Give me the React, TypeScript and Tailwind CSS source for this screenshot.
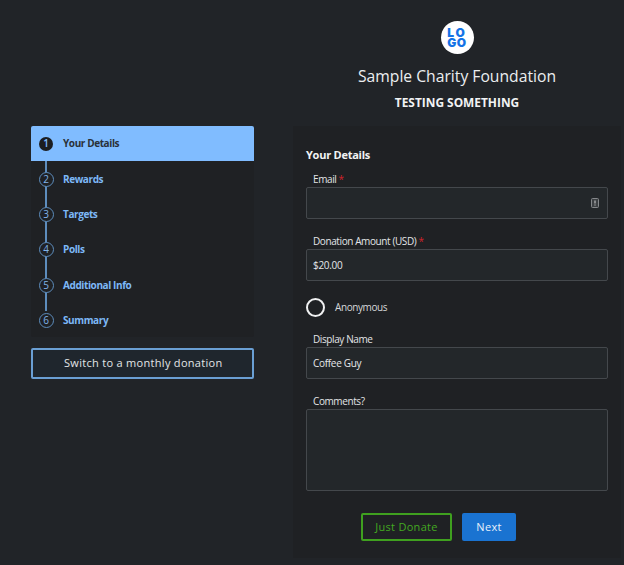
import React from "react";

const steps = ["Your Details", "Rewards", "Targets", "Polls", "Additional Info", "Summary"];

function Step({ n, label, active }: { n: number; label: string; active: boolean }) {
  return (
    <div className={active ? "relative h-[35.4px] flex items-center bg-[#80bcff] rounded-t-[2px]" : "relative h-[35.4px] flex items-center"}>
      <div className="w-[30px] mr-[2px] flex justify-center shrink-0">
        <div
          className={
            active
              ? "w-[14px] h-[14px] rounded-full bg-[#1b1d20] text-[#80bcff] text-[10px] font-semibold flex items-center justify-center"
              : "w-[15px] h-[15px] rounded-full border-[1.5px] border-[#5d8dbd] bg-[#1f2124] text-[#80b4ea] text-[10px] flex items-center justify-center"
          }
        >
          {n}
        </div>
      </div>
      <span className={active ? "text-[10px] tracking-[-0.4px] font-bold text-[#2a3138]" : "text-[10px] tracking-[-0.4px] font-bold text-[#7db8f7]"}>{label}</span>
    </div>
  );
}

function Label({ text, req }: { text: string; req?: boolean }) {
  return (
    <div className="pl-[7px] pt-[1px] h-[16px] leading-[16px] text-[10px] tracking-[-0.4px] text-[#e3e5e7]">
      {text}
      {req && <span className="text-[#d3222a]"> *</span>}
    </div>
  );
}

function Field({ value, children }: { value?: string; children?: React.ReactNode }) {
  return (
    <div className="h-[32px] flex items-center justify-between px-[6px] mt-[1px] rounded-[2px] border border-[#44484c] bg-[#23272a] text-[10px] tracking-[-0.3px] text-[#e6e8ea]">
      <span className="pt-[1px]">{value}</span>
      {children}
    </div>
  );
}

export default function App() {
  return (
    <div className="w-[624px] h-[565px] flex bg-[#212428] overflow-hidden" style={{ fontFamily: '"Open Sans", "Noto Sans", sans-serif' }}>
      <div className="w-[293px] shrink-0 pl-[31px] pt-[126px]">
        <div className="w-[223px]">
          <div className="relative h-[211px] bg-[#1f2124] rounded-[2px]">
            <div className="absolute left-[14px] top-[35px] h-[150px] w-[2px] bg-[#5d8dbd]" />
            {steps.map((s, i) => (
              <Step key={s} n={i + 1} label={s} active={i === 0} />
            ))}
          </div>
          <div className="mt-[11px] h-[31px] rounded-[2px] border-2 border-[#6a9fd4] bg-[#1f262d] flex items-center pl-[31px] text-[11px] tracking-[0.3px] text-[#e3e6e8]">
            Switch to a monthly donation
          </div>
        </div>
      </div>
      <div className="w-[328px] shrink-0 flex flex-col">
        <div className="h-[126px] flex flex-col items-center pt-[21px]">
          <div className="w-[33px] h-[33px] rounded-full bg-white flex flex-col items-center justify-center text-[#1473e6] text-[12px] leading-[9.5px] font-black" style={{ fontFamily: '"Inter", sans-serif' }}>
            <span className="tracking-[2px]">LO</span>
            <span className="tracking-[0.5px]">GO</span>
          </div>
          <div className="mt-[9px] h-[26px] leading-[26px] text-[15.7px] text-[#eceef0]">Sample Charity Foundation</div>
          <div className="h-[26px] leading-[26px] text-[11.9px] font-bold text-[#f2f3f4]">TESTING SOMETHING</div>
        </div>
        <div className="h-[432px] bg-[#1f2124] px-[13px] pt-[21px]">
          <div className="h-[16px] leading-[16px] text-[11px] tracking-[-0.25px] font-bold text-[#f2f3f4]">Your Details</div>
          <div className="mt-[7px]"><Label text="Email" req /></div>
          <Field>
            <svg width="8" height="10" viewBox="0 0 8 10" className="mr-[2px]">
              <rect x="0.5" y="0.5" width="7" height="9" rx="1" fill="#3c4043" stroke="#85888b" />
              <rect x="3.5" y="2.5" width="1" height="3" fill="#d5d6d7" />
              <rect x="3.5" y="6.5" width="1" height="1" fill="#d5d6d7" />
            </svg>
          </Field>
          <div className="mt-[13px]"><Label text="Donation Amount (USD)" req /></div>
          <Field value="$20.00" />
          <div className="mt-[17px] h-[19px] flex items-center">
            <div className="w-[19px] h-[19px] rounded-full border-2 border-[#f0f1f2]" />
            <span className="ml-[10px] text-[10px] tracking-[-0.4px] text-[#d6d8da]">Anonymous</span>
          </div>
          <div className="mt-[13px]"><Label text="Display Name" /></div>
          <Field value="Coffee Guy" />
          <div className="mt-[13px]"><Label text="Comments?" /></div>
          <div className="h-[82px] mt-[1px] rounded-[2px] border border-[#44484c] bg-[#23272a]" />
          <div className="mt-[22px] flex pl-[55px] gap-[10px]">
            <div className="w-[91px] h-[28px] rounded-[2px] border-2 border-[#3fa01f] flex items-center justify-center text-[11px] tracking-[0.3px] font-medium text-[#43a821]">Just Donate</div>
            <div className="w-[54px] h-[28px] rounded-[2px] bg-[#1a73d1] flex items-center justify-center text-[11px] tracking-[0.3px] font-medium text-[#e8f1fb]">Next</div>
          </div>
        </div>
      </div>
    </div>
  );
}
